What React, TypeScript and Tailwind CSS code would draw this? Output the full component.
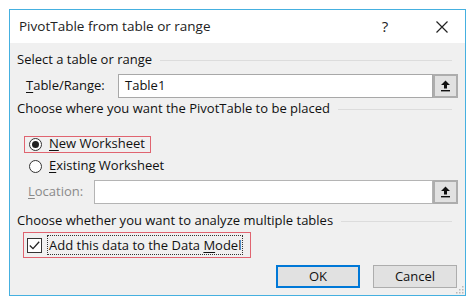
import React from 'react';

// Win10 style "PivotTable from table or range" dialog

const font = { fontFamily: '"Open Sans", "Noto Sans", sans-serif' };

const UploadButton: React.FC = () => (
  <button className="w-[25px] h-[24px] bg-[#e1e1e1] border-2 border-[#adadad] flex items-center justify-center shrink-0">
    <svg width="11" height="12" viewBox="0 0 11 12">
      <path d="M5.5 0.5 L10 5 L7 5 L7 8.5 L4 8.5 L4 5 L1 5 Z" fill="#111" />
      <rect x="1" y="10" width="9" height="1.4" fill="#111" />
    </svg>
  </button>
);

const GroupHeader: React.FC<{ children: React.ReactNode; className?: string }> = ({ children, className }) => (
  <div className={`flex items-center h-[20px] ${className ?? ''}`}>
    <span className="text-[13px] text-[#111] whitespace-nowrap">{children}</span>
    <div className="flex-1 h-px bg-[#dcdcdc] ml-[8px] mr-[6px]" />
  </div>
);

const Radio: React.FC<{ checked?: boolean }> = ({ checked }) => (
  <span className="w-[13px] h-[13px] rounded-full border border-[#333] bg-white flex items-center justify-center shrink-0">
    {checked && <span className="w-[7px] h-[7px] rounded-full bg-[#222]" />}
  </span>
);

const App: React.FC = () => {
  return (
    <div className="w-[474px] h-[303px] bg-white pt-[9px] pl-[9px]" style={font}>
      <div className="w-[457px] h-[287px] border border-[#45b0e0] flex flex-col">
        {/* title bar */}
        <div className="h-[33px] bg-white flex items-center pl-[9px] shrink-0">
          <span className="text-[13.5px] text-[#222] flex-1">PivotTable from table or range</span>
          <span className="text-[15px] text-[#222] w-[20px] text-center mr-[41px]">?</span>
          <svg width="12" height="12" viewBox="0 0 12 12" className="mr-[17px]">
            <path d="M0.5 0.5 L11.5 11.5 M11.5 0.5 L0.5 11.5" stroke="#222" strokeWidth="1.2" />
          </svg>
        </div>

        {/* body */}
        <div className="flex-1 bg-[#f0f0f0] pl-[7px] pr-[7px] pt-[7px] relative">
          <GroupHeader>Select a table or range</GroupHeader>

          <div className="flex items-center h-[24px] mt-[4px]">
            <span className="text-[13px] text-[#111] w-[101px] pl-[9px]">
              <span className="underline underline-offset-2">T</span>able/Range:
            </span>
            <div className="flex-1 h-[24px] bg-white border border-[#a8a8a8] flex items-center px-[6px] text-[13px] text-[#111]">
              Table1
            </div>
            <UploadButton />
          </div>

          <GroupHeader className="mt-[1px]">Choose where you want the PivotTable to be placed</GroupHeader>

          <div className="mt-[15px] h-[20px] flex items-center">
            <div className="ml-[7px] h-[17px] w-[127px] border border-[#e06470] flex items-center pl-[4px]">
              <Radio checked />
              <span className="text-[13px] text-[#111] ml-[7px]">
                <span className="underline underline-offset-2">N</span>ew Worksheet
              </span>
            </div>
          </div>

          <div className="mt-[2px] h-[20px] flex items-center">
            <div className="ml-[7px] flex items-center pl-[5px]">
              <Radio />
              <span className="text-[13px] text-[#111] ml-[7px]">
                <span className="underline underline-offset-2">E</span>xisting Worksheet
              </span>
            </div>
          </div>

          <div className="flex items-center h-[24px] mt-[4px]">
            <span className="text-[13px] text-[#8a8a8a] w-[77px] pl-[11px]">
              <span className="underline underline-offset-2">L</span>ocation:
            </span>
            <div className="flex-1 h-[24px] bg-white border border-[#b4b4b4]" />
            <UploadButton />
          </div>

          <GroupHeader className="mt-[7px]">Choose whether you want to analyze multiple tables</GroupHeader>

          <div className="mt-[1px] h-[26px] flex items-center">
            <div className="ml-[6px] h-[26px] w-[228px] border border-[#e06470] flex items-center pl-[3px]">
              <span className="w-[15px] h-[15px] border border-[#333] bg-white flex items-center justify-center shrink-0">
                <svg width="11" height="9" viewBox="0 0 11 9">
                  <path d="M0.8 4.5 L4 7.6 L10.2 0.8" stroke="#222" strokeWidth="1.3" fill="none" />
                </svg>
              </span>
              <span className="ml-[5px] px-[1px] border border-dotted border-[#333] text-[13px] text-[#111] leading-[18px]">
                Add this data to the Data <span className="underline underline-offset-2">M</span>odel
              </span>
            </div>
          </div>

          <div className="mt-[7px] flex justify-end gap-[13px] pr-[1px]">
            <button className="w-[84px] h-[23px] bg-[#e1e1e1] border-2 border-[#0078d7] text-[13px] text-[#111]">OK</button>
            <button className="w-[84px] h-[23px] bg-[#e1e1e1] border border-[#adadad] text-[13px] text-[#111]">Cancel</button>
          </div>

          {/* resize grip */}
          <svg width="8" height="8" viewBox="0 0 8 8" className="absolute right-[1px] bottom-[1px]">
            <rect x="6" y="0" width="1.5" height="1.5" fill="#b8b8b8" />
            <rect x="3" y="3" width="1.5" height="1.5" fill="#b8b8b8" />
            <rect x="6" y="3" width="1.5" height="1.5" fill="#b8b8b8" />
            <rect x="0" y="6" width="1.5" height="1.5" fill="#b8b8b8" />
            <rect x="3" y="6" width="1.5" height="1.5" fill="#b8b8b8" />
            <rect x="6" y="6" width="1.5" height="1.5" fill="#b8b8b8" />
          </svg>
        </div>
      </div>
    </div>
  );
};

export default App;
